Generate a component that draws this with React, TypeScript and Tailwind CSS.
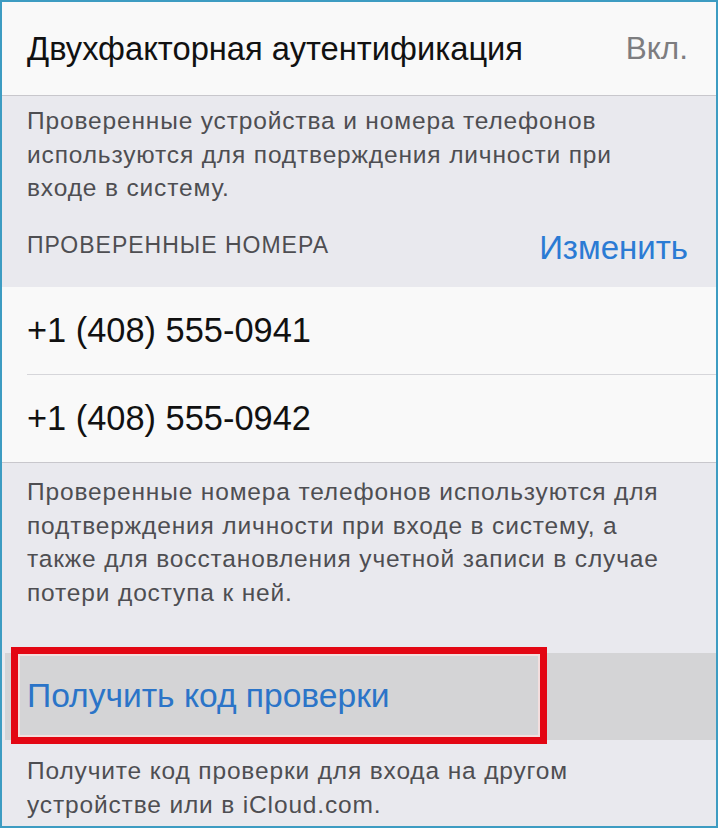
import React from "react";

const font = { fontFamily: '"Liberation Sans", Arial, sans-serif' };

function Note({ lines, className }: { lines: string[]; className?: string }) {
  return (
    <div className={className}>
      {lines.map((l, i) => (
        <div key={i} className="whitespace-nowrap text-[24.5px] leading-[33.5px] tracking-[0.85px] text-[#4e4e52]">
          {l}
        </div>
      ))}
    </div>
  );
}

export default function App() {
  return (
    <div
      className="relative h-[828px] w-[718px] overflow-hidden border-2 border-[#3d9cc2] bg-[#e9e9ee]"
      style={font}
    >
      {/* header row */}
      <div className="flex h-[94px] items-center justify-between border-b border-[#c8c7cc] bg-[#f9f9f9] pl-[25px] pr-[28px]">
        <span className="text-[32.7px] text-[#111]">Двухфакторная аутентификация</span>
        <span className="text-[31.5px] text-[#7d7d80]">Вкл.</span>
      </div>

      {/* description + section header */}
      <div className="h-[191px] pl-[25px] pr-[28px] pt-[8px]">
        <Note
          lines={[
            "Проверенные устройства и номера телефонов",
            "используются для подтверждения личности при",
            "входе в систему.",
          ]}
        />
        <div className="mt-[18px] flex items-end justify-between">
          <span className="pb-[10px] text-[23px] tracking-[1px] text-[#4e4e52]">ПРОВЕРЕННЫЕ НОМЕРА</span>
          <span className="text-[33px] text-[#2b7bd4]">Изменить</span>
        </div>
      </div>

      {/* phone numbers */}
      <div className="bg-[#f9f9f9]">
        <div className="flex h-[87px] items-center pl-[25px] text-[34.4px] text-[#111]">+1 (408) 555-0941</div>
        <div className="ml-[25px] h-px bg-[#d6d6da]" />
        <div className="flex h-[87px] items-center pl-[25px] text-[34.4px] text-[#111]">+1 (408) 555-0942</div>
      </div>
      <div className="h-px bg-[#c8c7cc]" />

      <Note
        className="h-[190px] pl-[25px] pt-[12px]"
        lines={[
          "Проверенные номера телефонов используются для",
          "подтверждения личности при входе в систему, а",
          "также для восстановления учетной записи в случае",
          "потери доступа к ней.",
        ]}
      />

      {/* highlighted action row */}
      <div className="relative ml-[3px] flex h-[87px] items-center bg-[#d4d4d6] pl-[22px]">
        <span className="text-[33.6px] text-[#2b74c8]">Получить код проверки</span>
        <div className="pointer-events-none absolute left-[6px] top-[-6px] h-[97px] w-[536px] border-[7px] border-[#e30613] shadow-[inset_0_0_0_2px_#f3dede]" />
      </div>

      <Note
        className="pl-[25px] pt-[14px]"
        lines={["Получите код проверки для входа на другом", "устройстве или в iCloud.com."]}
      />
    </div>
  );
}
